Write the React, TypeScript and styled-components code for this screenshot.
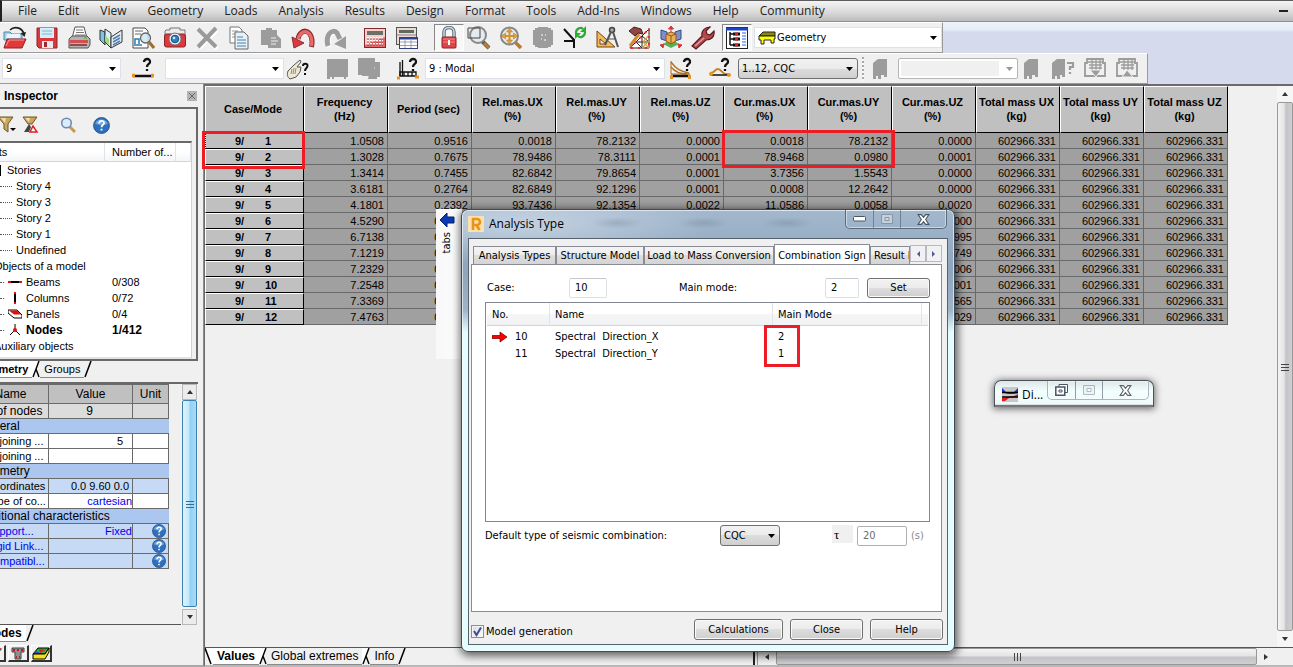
import React from 'react';
import styled, { createGlobalStyle, css } from 'styled-components';

const sans = `"Liberation Sans", Arial, sans-serif`;
const dialogFont = `"DejaVu Sans Condensed", Tahoma, "DejaVu Sans", sans-serif`;
const menuFont = `"Open Sans", "Segoe UI", sans-serif`;

const GlobalStyle = createGlobalStyle`
  *, *::before, *::after { box-sizing: border-box; }
  body { margin: 0; background: #f0f0f0; font-family: ${sans}; font-size: 11px; color: #000; }
  button, input, select { font: inherit; color: inherit; margin: 0; }
  svg { display: block; flex: none; }
`;

/* ---------- shell ---------- */

const Desktop = styled.div`
  position: relative;
  display: flex;
  flex-direction: column;
  min-height: 100vh;
  overflow: hidden;
  background: #f0f0f0;
`;

const MenuBar = styled.nav`
  display: flex;
  align-items: center;
  height: 22px;
  padding: 0 4px 0 16px;
  gap: 21px;
  border-top: 1px solid #5c5c5c;
  border-bottom: 1px solid #8f8f8f;
  border-left: 2px solid #222;
  background: linear-gradient(#f4f4f4, #d8d8d8 60%, #bcbcbc);
  font-family: ${menuFont};
  font-size: 12px;
`;

const MenuLink = styled.a`
  color: #222;
  text-decoration: none;
  line-height: 18px;
`;

const WindowDash = styled.button`
  margin-left: auto;
  width: 12px;
  height: 18px;
  padding: 0;
  border: 0;
  background: none;
  display: grid;
  place-items: center;
`;

const ToolbarDeck = styled.div`
  display: flex;
  flex-direction: column;
  align-items: flex-start;
  background: linear-gradient(#eef3fb, #e4ecf8 8px, #d5daec 10px, #d5daec);
`;

const Toolbar = styled.div`
  display: flex;
  align-items: center;
  height: 31px;
  background: #f0f0f0;
  border-bottom: 1px solid #9a9a9a;
  border-right: 1px solid #9a9a9a;
  border-top: 1px solid #fff;
`;

const ToolGroup = styled.div<{ $start?: number; $gap?: number }>`
  display: flex;
  align-items: center;
  gap: ${p => p.$gap ?? 8}px;
  padding-left: ${p => p.$start ?? 0}px;
`;

const ToolButton = styled.button<{ $pressed?: boolean }>`
  display: grid;
  place-items: center;
  width: ${p => (p.$pressed ? 30 : 24)}px;
  height: 27px;
  padding: 0;
  border: 0;
  background: none;
  ${p => p.$pressed && css`
    background: #f7f7f7;
    border: 1px solid #fff;
    border-top-color: #888;
    border-left-color: #888;
  `}
`;

const ComboBox = styled.div<{ $width: number; $kind?: 'flat' | 'button' | 'disabled' }>`
  display: grid;
  align-items: center;
  width: ${p => p.$width}px;
  height: 21px;
  border: 1px solid #dfe1e8;
  background: #fff;
  font-family: ${dialogFont};
  ${p => p.$kind === 'button' && css`
    border: 1px solid #707070;
    border-radius: 3px;
    background: linear-gradient(#f2f2f2, #ebebeb 50%, #dddddd 50%, #cfcfcf);
  `}
  ${p => p.$kind === 'disabled' && css`
    border-color: #b5b5b5;
    background: linear-gradient(#f0f0f0, #f0f0f0) 2px 2px / calc(100% - 20px) calc(100% - 4px) no-repeat #fff;
    border-radius: 2px;
  `}
  > * { grid-area: 1 / 1; }
  > svg.arrow { justify-self: end; margin-right: 4px; pointer-events: none; }
  > svg.lead { justify-self: start; margin-left: 3px; pointer-events: none; }
`;

const ComboSelect = styled.select<{ $indent?: number }>`
  appearance: none;
  width: 100%;
  height: 19px;
  padding: 0 16px 0 ${p => p.$indent ?? 3}px;
  border: 0;
  background: transparent;
  outline: none;
  font-size: 11px;
  opacity: 1;
`;

const Gripper = styled.span`
  width: 2px;
  height: 24px;
  margin: 0 4px;
  background: repeating-linear-gradient(#a8a8a8 0 2px, #f8f8f8 2px 4px);
`;

type ComboProps = {
  label: string;
  value: string;
  width: number;
  kind?: 'flat' | 'button' | 'disabled';
  indent?: number;
  lead?: React.ReactNode;
};

const Combo = ({ label, value, width, kind, indent, lead }: ComboProps) => (
  <ComboBox $width={width} $kind={kind}>
    {lead}
    <ComboSelect aria-label={label} defaultValue={value} disabled={kind === 'disabled'} $indent={indent}>
      <option value={value}>{value}</option>
    </ComboSelect>
    <svg className="arrow" width="7" height="4" viewBox="0 0 7 4">
      <path d="M0 0h7L3.5 4z" fill={kind === 'disabled' ? '#999' : '#000'} />
    </svg>
  </ComboBox>
);

/* ---------- toolbar drawings ---------- */

const Glyph = ({ children, size = 24 }: { children: React.ReactNode; size?: number }) => (
  <svg width={size} height={size} viewBox="0 0 24 24" aria-hidden="true">{children}</svg>
);

const OpenIcon = () => (
  <Glyph>
    <path d="M1 6h6l2 2h10v6H1z" fill="#a9d2ea" stroke="#4a86ad" />
    <path d="M3 12l1-4h13v4z" fill="#eaf6fd" />
    <path d="M1 22l3-9h19l-4 9z" fill="#e0383b" stroke="#9d1d22" />
    <path d="M3 20l3-6h15" fill="none" stroke="#f59a96" />
    <path d="M7 4c4-4 12-3 14 4" fill="none" stroke="#222" strokeWidth="1.6" />
    <path d="M17.500 7l4 4 1.500-5z" fill="#222" />
  </Glyph>
);
const SaveIcon = () => (
  <Glyph>
    <path d="M2 2h20v20H4l-2-2z" fill="#d8383d" stroke="#8e2227" />
    <path d="M5 2h14v10H5z" fill="#d6edf8" />
    <path d="M7 5h10M7 8h10" stroke="#7fb3cd" />
    <path d="M7 15h11v7H7z" fill="#e9e9ec" />
    <path d="M9 16h3v5H9z" fill="#a3262b" />
  </Glyph>
);
const PrintIcon = () => (
  <Glyph>
    <path d="M8 1h9l3 11H5z" fill="#fff" stroke="#555" />
    <path d="M9 4h7M9 6.500h8M8 9h10" stroke="#777" />
    <path d="M2 13l3-3h15l3 3v6l-2 3H2z" fill="#b9b2b2" stroke="#5b5353" />
    <path d="M3 14h18v3H3z" fill="#d05054" />
    <path d="M3 19h17" stroke="#7d2b2f" strokeWidth="1.500" />
    <path d="M17 12h3" stroke="#6fbf4b" strokeWidth="2" />
  </Glyph>
);
const BookIcon = () => (
  <Glyph>
    <path d="M1 4l5 2v13l-5-5z" fill="#7ec4e6" stroke="#333" />
    <path d="M6 3l6 4v15l-6-6z" fill="#dff0f8" stroke="#333" />
    <path d="M6 9l4 4v6l-4-4z" fill="#9fdc7a" />
    <path d="M12 11l11-7v12l-11 6z" fill="#e8eef4" stroke="#333" />
    <path d="M14 13l7-4M14 16l7-4M14 19l7-4" stroke="#4d7fb4" strokeWidth="1.500" />
  </Glyph>
);
const PreviewIcon = () => (
  <Glyph>
    <path d="M2 2h12l3 3v17H2z" fill="#fff" stroke="#4b4b4b" />
    <path d="M4 5h8M4 8h6" stroke="#666" />
    <path d="M4 18v-5h4v5M3 19h8" fill="none" stroke="#2d7bb0" strokeWidth="1.500" />
    <circle cx="14.500" cy="12" r="5" fill="#cfe6f3" fillOpacity=".85" stroke="#666" strokeWidth="1.300" />
    <path d="M18 16l5 6" stroke="#a26c2a" strokeWidth="3" />
  </Glyph>
);
const CameraIcon = () => (
  <Glyph>
    <path d="M3 4h4V2h10v2h5v5H2V5z" fill="#ececec" stroke="#777" />
    <rect x="1.500" y="8" width="21" height="13" rx="2" fill="#d93a3e" stroke="#8e2227" />
    <circle cx="12" cy="13" r="6" fill="#f2f2f2" stroke="#777" />
    <circle cx="12" cy="13" r="3.800" fill="#2b82c0" stroke="#174f7c" />
    <circle cx="11" cy="12" r="1.300" fill="#cbe8fa" />
  </Glyph>
);
const DeleteIcon = () => (
  <Glyph>
    <path d="M4 4l17 18M21 3L3 21" stroke="#fff" strokeWidth="4.500" transform="translate(1 1)" />
    <path d="M3 3l18 18M21 2L3 21" stroke="#9a9a9a" strokeWidth="4" />
  </Glyph>
);
const CopyIcon = () => (
  <Glyph>
    <path d="M3 1h9l3 3v13H3z" fill="#fff" stroke="#777" />
    <path d="M5 5h6M5 8h6M5 11h4" stroke="#999" />
    <path d="M8 6h9l4 4v13H8z" fill="#e5f2fa" stroke="#666" />
    <path d="M10 11h6M10 14h9M10 17h9M10 20h9" stroke="#4e7ea3" />
  </Glyph>
);
const PasteIcon = () => (
  <Glyph>
    <path d="M2 4h5V2h6v2h5v5l4 4v9H9v-3H2z" fill="#9c9c9c" />
    <path d="M12 12h5M12 15h7M12 18h5" stroke="#eee" />
  </Glyph>
);
const UndoIcon = () => (
  <Glyph>
    <path d="M20.500 21C23 9 16 2 10.500 6.500 8.500 8 7.500 10 7 13" fill="none" stroke="#8c2a2e" strokeWidth="5" />
    <path d="M20.500 20C22.500 9 16 3 10.500 7 8.500 9 7.500 10 7 13" fill="none" stroke="#ea6a6b" strokeWidth="3.200" />
    <path d="M1 11l2 11 10-5z" fill="#dc3a3e" stroke="#8c2a2e" />
  </Glyph>
);
const RedoIcon = () => (
  <Glyph>
    <path d="M5 20C2 9 9 2 14 7l3 6" fill="none" stroke="#fff" strokeWidth="5" transform="translate(1 1)" />
    <path d="M5 20C2 9 9 2 14 7l3 6" fill="none" stroke="#9c9c9c" strokeWidth="5" />
    <path d="M23 10v13l-12-5z" fill="#9c9c9c" />
  </Glyph>
);
const CalcIcon = () => (
  <Glyph>
    <rect x="1.500" y="2.500" width="21" height="19" fill="#e8686a" stroke="#7d2b2f" />
    <path d="M2 3h20v8L2 19z" fill="#f6cfcc" />
    <rect x="4" y="5" width="16" height="4" fill="#6c6f66" />
    <path d="M4 12h16M4 15h16M4 18h16" stroke="#fff" strokeWidth="2" strokeDasharray="2 1" />
    <path d="M4 13h16M4 16h16M4 19h16" stroke="#a33438" strokeDasharray="2 1" />
  </Glyph>
);
const CalcTableIcon = () => (
  <Glyph>
    <rect x="1.500" y="1.500" width="20" height="17" fill="#eed9d5" stroke="#555" />
    <rect x="4" y="4" width="15" height="3" fill="#5e6a60" />
    <rect x="4.500" y="11.500" width="18" height="11" fill="#fff" stroke="#35447a" />
    <path d="M5 12.500h17" stroke="#2c3f9a" strokeWidth="2" />
    <path d="M5 16h17M5 19.500h17M10 13v9M16 13v9" stroke="#9a9fae" />
    <path d="M2 9h19" stroke="#888" />
  </Glyph>
);
const LockIcon = () => (
  <Glyph>
    <path d="M7 12V6c0-6 10-6 10 0v6" fill="none" stroke="#60717c" strokeWidth="3.500" />
    <path d="M7 12V6c0-6 10-6 10 0v6" fill="none" stroke="#c5dbe6" strokeWidth="1.500" />
    <rect x="5" y="11" width="14" height="11" rx="1" fill="#df4448" stroke="#8c2226" />
    <path d="M6 13h12M6 16h12" stroke="#f18d8c" />
    <path d="M12 14v5" stroke="#fff" strokeWidth="2" />
  </Glyph>
);
const ZoomWindowIcon = () => (
  <Glyph>
    <path d="M15 15l7 7" stroke="#555" strokeWidth="4" />
    <path d="M17 17l5 5" stroke="#b87b30" strokeWidth="3" />
    <circle cx="11" cy="9" r="8" fill="#e4eaed" stroke="#888" strokeWidth="2" />
    <path d="M1 12V2h12v10z" fill="none" stroke="#444" />
  </Glyph>
);
const ZoomAllIcon = () => (
  <Glyph>
    <path d="M15 15l7 7" stroke="#b87b30" strokeWidth="3.500" />
    <circle cx="10.500" cy="10" r="8.500" fill="#e6e9e8" stroke="#888" strokeWidth="2" />
    <path d="M10.500 4v12M4.500 10h12" stroke="#d8922c" strokeWidth="2" />
    <path d="M10.500 2l3 4h-6zM10.500 18l3-4h-6zM2.500 10l4-3v6zM18.500 10l-4-3v6z" fill="#e2a13c" stroke="#a87424" strokeWidth=".5" />
  </Glyph>
);
const GreyBlobIcon = () => (
  <Glyph>
    <path d="M4 2h3V1h10v1h3v2h2v15h-2v2h-3v1H7v-1H4v-2H2V4h2z" fill="#9c9c9c" />
    <path d="M10 9h2M14 9h1M10 13h1M13 14h2" stroke="#ddd" strokeWidth="1.500" />
  </Glyph>
);
const AxesRefreshIcon = () => (
  <Glyph>
    <path d="M1 3l10 11M11 22V13M1 15h10" fill="none" stroke="#111" strokeWidth="2" />
    <path d="M13 7c0-5 5-6 7-4M22 6c0 5-5 6-7 4" fill="none" stroke="#2cab35" strokeWidth="2.200" />
    <path d="M23 0v6h-6zM12 13V7h6z" fill="#2cab35" />
  </Glyph>
);
const CompassIcon = () => (
  <Glyph>
    <path d="M2 5v16h18z" fill="#f5b85a" stroke="#6f4717" />
    <path d="M5 13v5h6z" fill="#f0f0f0" stroke="#6f4717" />
    <circle cx="17" cy="4" r="2.500" fill="#aaa" stroke="#444" strokeWidth="1.500" />
    <path d="M16 6l-6 13M18 6l5 15" stroke="#555" strokeWidth="2" />
    <path d="M13 13h8" stroke="#555" />
  </Glyph>
);
const HammerIcon = () => (
  <Glyph>
    <path d="M22 2v20H3z" fill="#fff" />
    <path d="M22 2v20H3M3 22L22 3M15 10v12M9 16h13M15 10l7 6M9 16l6 6" fill="none" stroke="#222" />
    <path d="M15 22l7-7M16 16l6 6M22 9l-6 7" fill="none" stroke="#e8a030" strokeWidth="1.300" />
    <path d="M3 22L22 3M22 3v19H3" fill="none" stroke="#e03030" strokeWidth="2" strokeDasharray="2 5" />
    <path d="M3 20L12 8" stroke="#d38a2f" strokeWidth="3" />
    <path d="M2 5l5-4 7 2 2 5-5-1-3 3z" fill="#8f4744" stroke="#4b1e20" />
  </Glyph>
);
const CubeIcon = () => (
  <Glyph>
    <path d="M2 4l6 2v9l-6-2zM22 4l-6 2v9l6-2z" fill="#7b90cc" stroke="#34498a" />
    <path d="M4 18l8-5 8 5-8 4z" fill="#58b055" />
    <path d="M7 8l5-2 5 2v7l-5 3-5-3z" fill="#f0ad54" stroke="#8d5a18" />
    <path d="M7 8l5 2 5-2M12 10v8" fill="none" stroke="#8d5a18" />
    <path d="M12 6V1M9.500 3L12 0l2.500 3zM1 19l4-1-1 4zM23 19l-4-1 1 4z" fill="#d5373b" stroke="#d5373b" />
  </Glyph>
);
const WrenchIcon = () => (
  <Glyph>
    <path d="M1 20l10-10c-1-5 3-9 8-9l-4 4 1 3 3 1 4-4c1 6-3 9-8 9L5 23z" fill="#b8474d" stroke="#571c20" strokeWidth="1.200" />
    <path d="M4 20l9-8" stroke="#e19a9b" strokeWidth="1.500" />
  </Glyph>
);
const InspectorIcon = () => (
  <Glyph>
    <rect x="1.500" y="1.500" width="21" height="21" fill="#fff" stroke="#222" />
    <path d="M1 3h22" stroke="#1745c8" strokeWidth="3" />
    <path d="M5 6v13M5 8h4M5 13h4M5 19h4" stroke="#111" strokeWidth="1.500" fill="none" />
    <path d="M8 8h7M8 13h7M8 19h7" stroke="#111" strokeWidth="3" />
    <path d="M10 8h3M10 13h3M10 19h3" stroke="#e02020" strokeWidth="3" />
    <path d="M17 7h4M17 10h4M17 13h4M17 16h4M17 19h4" stroke="#2a66e0" />
  </Glyph>
);
const Query = ({ x = 0 }: { x?: number }) => (
  <path d={`M${13 + x} 5c0-4 6.500-4 6 0 0 2-3 2-3 5M${16 + x} 12v2`} fill="none" stroke="#111" strokeWidth="2.300" />
);
const BarQueryIcon = () => (
  <Glyph>
    <path d="M2 19h20" stroke="#111" strokeWidth="2.500" />
    <path d="M1 18.500h3M20 18.500h3" stroke="#e69422" strokeWidth="3.500" />
    <Query />
  </Glyph>
);
const HandQueryIcon = () => (
  <Glyph>
    <path d="M2 14l6-6 6-5 1 2-4 5 4 0-1 5-4 5-6 2c-3-2-3-5-2-8z" fill="#eee9d3" stroke="#555" />
    <path d="M6 12l-1 5M8 11l-1 6M10 11l-1 6" stroke="#777" strokeWidth=".8" />
    <path d="M17 9c0-3 5-3 4.500 0 0 2-2.500 2-2.500 5M19 16v2" fill="none" stroke="#111" strokeWidth="2" />
  </Glyph>
);
const GreyPanelIcon = () => (
  <Glyph>
    <path d="M2 2h21v18h-2v2h-2v-2H9v2H7v-2H5v2H2z" fill="#9c9c9c" />
  </Glyph>
);
const GreyPanelsIcon = () => (
  <Glyph>
    <path d="M1 1h17v4h5v15h-3v2h-9v-3H5v-1H1z" fill="#9c9c9c" />
    <path d="M17 11h1M11 20h1" stroke="#eee" />
  </Glyph>
);
const SupportQueryIcon = () => (
  <Glyph>
    <path d="M4 5v14M6.500 3v16" stroke="#111" strokeWidth="1.300" />
    <path d="M4 15h16v4H4zM8 15v4M12 15v4M16 15v4" fill="none" stroke="#111" strokeWidth="1.300" />
    <path d="M1 21h3M19 20h4" stroke="#e69422" strokeWidth="3" />
    <Query x={1} />
  </Glyph>
);
const DiagramQueryIcon = () => (
  <Glyph>
    <path d="M2 4v13h19" fill="none" stroke="#b06f1b" />
    <path d="M2 5c5 7 9 9 18 11M2 10c4 5 9 7 16 7" fill="none" stroke="#b06f1b" strokeWidth="1.300" />
    <path d="M2 19h19" stroke="#111" strokeWidth="2.500" />
    <path d="M1 20h3M19 20h3" stroke="#e69422" strokeWidth="4" />
    <Query x={2} />
  </Glyph>
);
const WaveQueryIcon = () => (
  <Glyph>
    <path d="M2 16c6 0 4-4 8-4s4 7 11 5" fill="none" stroke="#c98420" strokeWidth="2" />
    <path d="M3 18h17" stroke="#111" strokeWidth="1.500" />
    <circle cx="3" cy="17" r="2" fill="#e69422" />
    <circle cx="21" cy="18" r="2" fill="#e69422" />
    <Query x={1} />
  </Glyph>
);
const GreyBlockIcon = () => (
  <Glyph>
    <path d="M5 6l5-4h9v18h-3v-2h-3v4h-3v-3H8v3H5z" fill="#9c9c9c" />
  </Glyph>
);
const GreyBlockQueryIcon = () => (
  <Glyph>
    <path d="M1 6l5-4h8v18h-3v-2H9v4H6v-3H4v3H1z" fill="#9c9c9c" />
    <path d="M16 6h6v4h-3v3M19 15v2" fill="none" stroke="#9c9c9c" strokeWidth="2.200" />
  </Glyph>
);
const GreyGridIcon = ({ up }: { up?: boolean }) => (
  <Glyph>
    <path d="M4 2h16v4h2v13H2V6h2z" fill="none" stroke="#9c9c9c" strokeWidth="1.800" />
    <path d="M5 5h14M6 8h13M6 11h13M9 3v10M13 3v10M17 3v10" stroke="#9c9c9c" strokeWidth="1.300" />
    <path d={up ? 'M7 20l5-7 6 7z' : 'M7 13h11l-5 7z'} fill="#9c9c9c" stroke="#f0f0f0" />
  </Glyph>
);

/* ---------- workspace ---------- */

const Workspace = styled.div`
  display: flex;
  flex: 1;
  min-height: 0;
`;

const InspectorPane = styled.aside`
  display: flex;
  flex: none;
  justify-content: flex-end;
  width: 204px;
  overflow: hidden;
  border-right: 1px solid #8c8c8c;
  border-bottom: 2px solid #a8a8a8;
`;

const InspectorBody = styled.div`
  display: flex;
  flex-direction: column;
  flex: none;
  width: 240px;
  padding: 0 5px 0 0;
`;

const PaneTitle = styled.h2`
  display: flex;
  align-items: center;
  justify-content: space-between;
  margin: 0;
  height: 23px;
  padding: 0 1px 0 41px;
  font-size: 12px;
  font-weight: bold;
`;

const PaneClose = styled.button`
  display: grid;
  place-items: center;
  width: 10px;
  height: 10px;
  padding: 0;
  border: 0;
  background: #b4b4b4;
`;

const TreeFrame = styled.div`
  border-top: 2px solid #696969;
  border-right: 2px solid #696969;
  border-bottom: 2px solid #696969;
  padding-right: 4px;
`;

const TreeTools = styled.div`
  display: flex;
  align-items: center;
  height: 32px;
  padding-left: 32px;
`;

const TreeToolButton = styled.button<{ $wide?: boolean }>`
  display: grid;
  place-items: center;
  width: ${p => (p.$wide ? 46 : 24)}px;
  height: 24px;
  padding: 0 0 0 ${p => (p.$wide ? 4 : 0)}px;
  border: 0;
  background: none;
`;

const TreeBox = styled.div`
  height: 218px;
  background: #fff;
  border-top: 2px solid #696969;
  border-right: 1px solid #d0d0d0;
  border-bottom: 2px solid #e3e3e3;
`;

const TreeTable = styled.table`
  width: 100%;
  table-layout: fixed;
  border-collapse: separate;
  border-spacing: 0;
  th {
    height: 19px;
    padding: 0 0 0 7px;
    text-align: left;
    font-weight: normal;
    background: linear-gradient(#fff, #fff 45%, #f3f5f8);
    border-right: 1px solid #dfe3e8;
    border-bottom: 1px solid #d5d5d5;
  }
  td { height: 16px; padding: 0; white-space: nowrap; }
  td:nth-child(2) { padding-left: 7px; }
`;

const NodeLabel = styled.span<{ $indent: number; $bold?: boolean }>`
  display: flex;
  align-items: center;
  gap: 4px;
  height: 16px;
  padding-left: ${p => p.$indent}px;
  font-weight: ${p => (p.$bold ? 'bold' : 'normal')};
  font-size: ${p => (p.$bold ? 12 : 11)}px;
`;

const CountText = styled.span<{ $bold?: boolean }>`
  font-weight: ${p => (p.$bold ? 'bold' : 'normal')};
  font-size: ${p => (p.$bold ? 12 : 11)}px;
`;

const Dots = styled.i<{ $width: number }>`
  width: ${p => p.$width}px;
  border-top: 1px dotted #555;
`;

const TabStrip = styled.div<{ $start: number; $height: number }>`
  display: flex;
  align-items: stretch;
  height: ${p => p.$height}px;
  padding-left: ${p => p.$start}px;
`;

const SheetTab = styled.button<{ $active?: boolean; $size?: number }>`
  height: 17px;
  padding: 0 4px;
  border: 0;
  border-bottom: 1px solid #8a8a8a;
  background: ${p => (p.$active ? '#fff' : '#f0f0f0')};
  font-size: ${p => p.$size ?? 12}px;
  font-weight: ${p => (p.$active ? 'bold' : 'normal')};
  line-height: 15px;
  white-space: nowrap;
`;

const Slant = ({ kind }: { kind: 'open' | 'join' | 'close' }) => (
  <svg width="8" height="17" viewBox="0 0 8 17" aria-hidden="true">
    {kind === 'open' && <><path d="M0 0L6 16h2V0z" fill="#fff" /><path d="M0 0L6 16" stroke="#000" strokeWidth="1.500" /></>}
    {kind === 'join' && <><path d="M0 0h6L1 16H0z" fill="#fff" /><path d="M7 0L1 16M4 8l3 8" fill="none" stroke="#000" strokeWidth="1.400" /></>}
    {kind === 'close' && <path d="M7 0L1 16" stroke="#000" strokeWidth="1.500" />}
  </svg>
);

const PropertyArea = styled.div`
  display: flex;
  flex: 1;
  margin-top: 4px;
  border-top: 2px solid #696969;
`;

const PropertyMain = styled.div`
  flex: 1;
  border-bottom: 1px solid #555;
`;

const PropertyTable = styled.table`
  width: 196px;
  margin-left: 9px;
  table-layout: fixed;
  border-collapse: collapse;
  font-size: 11px;
  td, th { height: 15px; padding: 0 2px 0 13px; border: 1px solid #6a6a6a; white-space: nowrap; overflow: hidden; line-height: 13px; }
  thead th { height: 19px; padding: 0; background: #c0c0c0; font-size: 12px; font-weight: normal; text-align: center; }
  td:nth-child(2) { text-align: right; padding: 0; }
  td:nth-child(3) { padding: 0 2px 0 0; }
  td svg { margin-left: auto; }
`;

const PropertyRow = styled.tr<{ $tone: 'info' | 'group' | 'plain' | 'blue'; $link?: boolean; $inset?: number }>`
  background: ${p => ({ info: '#dcdcdc', group: '#abc7f0', plain: '#fff', blue: '#c6d9f5' })[p.$tone]};
  color: ${p => (p.$link ? '#0000f0' : '#000')};
  ${p => p.$tone === 'group' && css`
    && td { padding-left: 4px; font-size: 12px; text-align: left; border-color: #abc7f0; border-top-color: #6a6a6a; border-bottom-color: #6a6a6a; }
  `}
  ${p => p.$tone === 'info' && css`
    && td { font-size: 12px; text-align: center; padding: 0 4px 0 0; }
  `}
  && td:nth-child(2) { padding-right: ${p => p.$inset ?? 0}px; }
`;

const PropertyLink = styled.a`
  color: #0000f0;
  text-decoration: none;
`;

const BlueBar = styled.div`
  display: flex;
  flex-direction: column;
  width: 17px;
  padding: 0 1px;
  background: #f4f4f4;
`;

const BarArrow = styled.button<{ $flat?: boolean; $across?: boolean }>`
  display: grid;
  place-items: center;
  flex: none;
  width: ${p => (p.$across ? 18 : 15)}px;
  height: ${p => (p.$across ? 15 : 16)}px;
  padding: 0;
  border: ${p => (p.$flat ? '0' : '1px solid #b8b8b8')};
  background: ${p => (p.$flat ? 'none' : '#ececec')};
`;

const BlueThumb = styled.div`
  flex: 1;
  display: grid;
  place-items: center;
  margin-bottom: 2px;
  border: 1px solid #3c7fb1;
  border-radius: 2px;
  background: linear-gradient(90deg, #e0f3fc, #c4e8fa 45%, #8fd0f3 55%, #abdcf7);
`;

const ViewButtons = styled.div`
  display: flex;
  height: 22px;
  padding: 2px 0 0 22px;
  gap: 2px;
`;

const ViewButton = styled.button`
  display: grid;
  place-items: center;
  width: 21px;
  height: 17px;
  padding: 0;
  background: #f0f0f0;
  border: 1px solid #fff;
  border-right: 2px solid #333;
  border-bottom: 2px solid #333;
`;

const HelpBall = ({ size }: { size: number }) => (
  <svg width={size} height={size} viewBox="0 0 16 16" aria-hidden="true">
    <circle cx="8" cy="8" r="7.500" fill="#2f6fbe" stroke="#274f86" strokeWidth=".8" />
    <path d="M2 6a6.500 6 0 0 1 12 0c-3 2-8 2-12 0z" fill="#6fa4dc" />
    <path d="M5.800 6c0-3.200 4.800-3 4.600-.3C10.300 7.300 8 7.400 8 9.600M8 11v1.800" fill="none" stroke="#fff" strokeWidth="1.700" />
  </svg>
);

const FunnelIcon = ({ triangle }: { triangle?: boolean }) => (
  <svg width="20" height="18" viewBox="0 0 20 18" aria-hidden="true">
    {triangle ? (
      <>
        <path d="M2 1h14l-5 7H7z" fill="#c9a560" stroke="#6d5523" />
        <path d="M4 2h5L8 6z" fill="#f0deb0" />
        <path d="M3 16l5-8 2 3-2 5z" fill="#444" />
        <path d="M9 16l3-6 4 6z" fill="#fff" stroke="#e02020" strokeWidth="1.500" />
      </>
    ) : (
      <>
        <path d="M1 1h15l-5 7v8l-4-3V8z" fill="#c9a560" stroke="#6d5523" />
        <path d="M4 2h5L8 7z" fill="#f0deb0" />
        <path d="M13 12h6l-3 3z" fill="#000" />
      </>
    )}
  </svg>
);

const SearchIcon = () => (
  <svg width="17" height="17" viewBox="0 0 17 17" aria-hidden="true">
    <path d="M9 9l6 6" stroke="#c79a4c" strokeWidth="3" />
    <circle cx="6.500" cy="6" r="4.800" fill="#d8ecfb" stroke="#7288b4" strokeWidth="1.600" />
  </svg>
);

const BeamIcon = () => (
  <svg width="14" height="14" viewBox="0 0 14 14"><path d="M0 6h14v2H0z" fill="#e01010" /><path d="M3 6h8v2H3z" fill="#000" /></svg>
);
const ColumnIcon = () => (
  <svg width="14" height="14" viewBox="0 0 14 14"><path d="M6 1h2v12H6z" fill="#e01010" /><path d="M6 3h2v8H6z" fill="#000" /></svg>
);
const PanelIcon = () => (
  <svg width="14" height="14" viewBox="0 0 14 14"><path d="M0 3h9l5 5v3H6L0 6z" fill="#fff" stroke="#000" /><path d="M1 3.500h8l4 4H6z" fill="#e01010" /></svg>
);
const NodeIcon = () => (
  <svg width="14" height="14" viewBox="0 0 14 14"><path d="M7 1v6M7 7l-5 5M7 7l5 5" stroke="#000" fill="none" /><circle cx="7" cy="7" r="2" fill="#e01010" /></svg>
);

/* ---------- results sheet ---------- */

const SheetPane = styled.main`
  position: relative;
  display: flex;
  flex-direction: column;
  flex: 1;
  min-width: 0;
  border-top: 2px solid #6b6b6b;
  border-left: 1px solid #6b6b6b;
  border-bottom: 2px solid #b8b8b8;
`;

const SheetRow = styled.div`
  display: flex;
  flex: 1;
  min-height: 0;
`;

const SheetScroll = styled.div`
  flex: 1;
  min-width: 0;
`;

const ResultTable = styled.table`
  width: 1023px;
  table-layout: fixed;
  border-collapse: separate;
  border-spacing: 0;
  font-size: 11px;
  thead th {
    height: 47px;
    padding: 0 3px 2px 0;
    background: #c0c0c0;
    border: 1px solid #000;
    border-top-color: #fff;
    border-left-color: #fff;
    line-height: 14px;
    white-space: nowrap;
  }
  td {
    height: 16px;
    padding: 0 3px 0 0;
    background: #a0a0a0;
    border-right: 1px solid #696969;
    border-bottom: 1px solid #696969;
    text-align: right;
    line-height: 14px;
  }
  tbody th {
    height: 16px;
    padding: 0;
    background: #c0c0c0;
    border: 1px solid #000;
    border-top-color: #fff;
    border-left-color: #fff;
    line-height: 14px;
  }
`;

const ModeCell = styled.span<{ $focus?: boolean }>`
  display: grid;
  grid-template-columns: 30px 1fr;
  padding-left: 29px;
  text-align: left;
  outline: ${p => (p.$focus ? '1px dotted #000' : 'none')};
`;

const Callout = styled.div<{ $left: number; $top: number; $width: number; $height: number }>`
  position: absolute;
  left: ${p => p.$left}px;
  top: ${p => p.$top}px;
  width: ${p => p.$width}px;
  height: ${p => p.$height}px;
  border: 3px solid #ee1c25;
  pointer-events: none;
`;

const GreyBar = styled.div`
  display: flex;
  flex-direction: column;
  align-items: center;
  width: 16px;
  background: #f6f6f6;
`;

const GreyThumb = styled.div<{ $across?: boolean }>`
  flex: 1;
  display: grid;
  place-items: center;
  align-self: stretch;
  border: 1px solid #989898;
  border-radius: 2px;
  background: ${p => (p.$across
    ? 'linear-gradient(#f4f4f4, #e4e4e6 45%, #c4c4c8 55%, #cfcfd2)'
    : 'linear-gradient(90deg, #f4f4f4, #e4e4e6 45%, #c4c4c8 55%, #cfcfd2)')};
`;

const SheetFooter = styled.div`
  display: grid;
  grid-template-columns: 550px 1fr;
  height: 18px;
  border-top: 1px solid #555;
`;

const FooterTabs = styled.div`
  display: flex;
  border-right: 2px solid #222;
`;

const AcrossBar = styled.div`
  display: flex;
  align-items: center;
  margin: 0 18px 0 2px;
  border-left: 1px solid #999;
`;

const Grip = ({ across, blue }: { across?: boolean; blue?: boolean }) => (
  <svg width="8" height="8" viewBox="0 0 8 8" aria-hidden="true">
    <path d={across ? 'M1.500 0v8M4.500 0v8M7.500 0v8' : 'M0 1.500h8M0 4.500h8M0 7.500h8'} stroke={blue ? '#3a6c93' : '#444'} />
  </svg>
);

const Triangle = ({ to }: { to: 'up' | 'down' | 'left' | 'right' }) => (
  <svg width="8" height="8" viewBox="0 0 8 8" aria-hidden="true">
    <path
      fill="#333"
      d={{ up: 'M1 6h6L4 2z', down: 'M1 2h6L4 6z', left: 'M6 1v6L2 4z', right: 'M2 1v6l4-3z' }[to]}
    />
  </svg>
);

/* ---------- floating windows ---------- */

const TabsFlyout = styled.div`
  position: absolute;
  left: 436px;
  top: 209px;
  width: 26px;
  height: 150px;
  display: flex;
  flex-direction: column;
  align-items: center;
  gap: 4px;
  padding: 3px 4px 0 0;
  background: linear-gradient(90deg, #f8f8f8, #fcfcfc);
`;

const FlyoutText = styled.span`
  writing-mode: vertical-rl;
  transform: rotate(180deg);
  font-family: ${dialogFont};
  font-size: 11px;
  line-height: 14px;
`;

const Dialog = styled.section`
  position: absolute;
  left: 461px;
  top: 209px;
  width: 494px;
  display: flex;
  flex-direction: column;
  padding: 0 6px 6px;
  border: 1px solid #3f4a55;
  border-radius: 7px;
  background:
    radial-gradient(ellipse 26px 6px at 155px 13px, rgba(80, 96, 112, 0.22), transparent),
    radial-gradient(ellipse 26px 6px at 241px 13px, rgba(80, 96, 112, 0.22), transparent),
    radial-gradient(ellipse 26px 6px at 325px 13px, rgba(80, 96, 112, 0.22), transparent),
    radial-gradient(ellipse 190px 40px at 60px 14px, rgba(225, 234, 244, 0.55), transparent),
    linear-gradient(#a3b8cd, #8ea5bd 60px, #9fb3c8 100px, #e4fdff 122px, #e4fdff);
  box-shadow: inset 0 0 0 1px rgba(255, 255, 255, 0.6), 1px 2px 9px 2px rgba(0, 0, 0, 0.6);
  font-family: ${dialogFont};
`;

const DialogTitle = styled.header`
  display: flex;
  align-items: center;
  height: 28px;
  padding-right: 1px;
  gap: 5px;
  font-family: ${menuFont};
  font-size: 12px;
  h1 { margin: 0; font: inherit; line-height: 18px; }
`;

const CaptionButtons = styled.div<{ $light?: boolean }>`
  display: flex;
  flex: none;
  align-self: flex-start;
  margin-left: auto;
  height: 19px;
  border: 1px solid ${p => (p.$light ? '#aab4ba' : '#5c6b7a')};
  border-top: 0;
  border-radius: 0 0 5px 5px;
  box-shadow: inset 0 0 0 1px rgba(255, 255, 255, 0.45);
`;

const CaptionButton = styled.button<{ $width: number }>`
  display: grid;
  place-items: center;
  width: ${p => p.$width}px;
  padding: 0;
  border: 0;
  background: none;
  & + & { border-left: 1px solid rgba(80, 95, 110, 0.6); }
`;

const DialogBody = styled.div`
  display: flex;
  flex-direction: column;
  padding: 5px 4px 4px 2px;
  border: 1px solid #58626c;
  background: #f0f0f0;
`;

const DialogTabs = styled.div`
  display: flex;
  align-items: flex-end;
  height: 20px;
  padding: 0 1px 0 2px;
`;

const DialogTab = styled.button<{ $active?: boolean; $cut?: boolean; $width: number }>`
  flex: none;
  width: ${p => p.$width}px;
  height: ${p => (p.$active ? 21 : 18)}px;
  margin-bottom: ${p => (p.$active ? -1 : 0)}px;
  padding: ${p => (p.$cut ? '0 0 0 3px' : '0')};
  border: 1px solid #898c95;
  border-bottom: 0;
  background: ${p => (p.$active ? '#fff' : 'linear-gradient(#f4f4f4, #ececec 50%, #dedede 50%, #d4d4d4)')};
  white-space: nowrap;
  overflow: hidden;
  text-align: ${p => (p.$cut ? 'left' : 'center')};
`;

const TabScroller = styled.div`
  display: flex;
  flex: none;
  align-self: flex-start;
  margin: 1px 0 0 auto;
  height: 17px;
`;

const TabScrollButton = styled.button`
  display: grid;
  place-items: center;
  width: 16px;
  padding: 0;
  border: 1px solid #b9b9c6;
  background: #f1f1f4;
`;

const TabPage = styled.div`
  display: flex;
  flex-direction: column;
  height: 348px;
  margin-right: 1px;
  padding: 12px 11px 0 13px;
  border: 1px solid #898c95;
  background: #fff;
`;

const FormGrid = styled.div`
  display: grid;
  grid-template-columns: 82px 38px 1fr 34px 71px;
  align-items: center;
  padding-left: 2px;
  height: 21px;
`;

const ModeField = styled.label`
  padding-left: 72px;
`;

const SetSlot = styled.div`
  display: flex;
  padding-left: 8px;
`;

const TextField = styled.input`
  width: 100%;
  height: 20px;
  padding: 0 5px;
  border: 1px solid #dcdfe6;
  border-top-color: #c5c8cf;
  border-radius: 2px;
  background: #fff;
  outline: none;
  &:disabled { color: #6d6d6d; border-color: #afafaf; opacity: 1; }
`;

const PushButton = styled.button<{ $width: number; $height?: number }>`
  width: ${p => p.$width}px;
  height: ${p => p.$height ?? 21}px;
  padding: 0;
  border: 1px solid #707070;
  border-radius: 3px;
  background: linear-gradient(#f2f2f2, #ebebeb 50%, #dddddd 50%, #cfcfcf);
  box-shadow: inset 0 0 0 1px #fafafa;
`;

const ListFrame = styled.div`
  position: relative;
  height: 220px;
  margin-top: 4px;
  padding: 0 1px;
  border: 1px solid #828790;
  background: #fff;
`;

const ModeTable = styled.table`
  width: 100%;
  table-layout: fixed;
  border-collapse: separate;
  border-spacing: 0;
  th {
    height: 23px;
    padding: 0 0 0 5px;
    text-align: left;
    font-weight: normal;
    background: linear-gradient(#fff, #fff 50%, #f5f6f8 50%, #f1f2f4);
    border-right: 1px solid #e2e4e8;
    border-bottom: 1px solid #d5d5d5;
  }
  th:last-child { border-right: 0; }
  td { height: 17px; padding: 0 0 0 5px; line-height: 13px; white-space: pre; }
  tbody::before { content: ''; display: block; height: 2px; }
`;

const NumberCell = styled.span`
  display: grid;
  grid-template-columns: 23px 1fr;
  align-items: center;
`;

const OptionRow = styled.div`
  display: grid;
  grid-template-columns: 235px 60px 52px 25px 50px 1fr;
  align-items: center;
  margin-top: 3px;
  height: 21px;
`;

const Tau = styled.label`
  grid-column: 4;
  width: 21px;
  height: 18px;
  padding-left: 2px;
  background: #f0f0f0;
  font-family: "Liberation Serif", serif;
  font-size: 13px;
  line-height: 19px;
  align-self: start;
`;

const UnitNote = styled.span`
  padding-left: 4px;
  color: #8a8a8a;
`;

const DialogFooter = styled.footer`
  display: flex;
  align-items: center;
  padding-top: 7px;
  gap: 7px;
`;

const CheckLabel = styled.label`
  display: flex;
  align-items: center;
  gap: 2px;
  margin-right: auto;
  padding-top: 4px;
  > span:first-child { display: grid; }
  > span:first-child > * { grid-area: 1 / 1; }
`;

const CheckInput = styled.input`
  appearance: none;
  width: 13px;
  height: 13px;
  margin: 0;
  border: 1px solid #8e8f8f;
  background: linear-gradient(135deg, #d5dae0, #fff);
  box-shadow: inset 0 0 0 1px #f4f4f4;
`;

const MiniWindow = styled.section`
  position: absolute;
  left: 994px;
  top: 380px;
  width: 160px;
  height: 27px;
  display: flex;
  align-items: center;
  gap: 4px;
  padding: 0 5px 0 7px;
  border: 1px solid #4c5358;
  border-bottom: 0;
  border-radius: 7px 7px 0 0;
  background: linear-gradient(#dfe6e8, #f3ffff 40%, #eefafa 90%, #777 92%);
  box-shadow: 0 1px 7px 1px rgba(0, 0, 0, 0.55);
  font-family: ${menuFont};
  font-size: 12px;
`;

const CrossGlyph = ({ thin }: { thin?: boolean }) => (
  <svg width="13" height="11" viewBox="0 0 12 10" aria-hidden="true">
    <path d="M1 .5h3l2 2.500 2-2.500h3L8 5l3 4.500H8L6 7 4 9.500H1L4 5z" fill="#fff" stroke={thin ? '#5d6468' : '#4a5663'} />
  </svg>
);
const MaxGlyph = () => (
  <svg width="12" height="10" viewBox="0 0 12 10" aria-hidden="true" opacity="0.5">
    <path d="M.5.5h11v9H.5z" fill="#e6ecf0" stroke="#6c7a86" />
    <path d="M4 3.500h4v3H4z" fill="#fff" stroke="#6c7a86" />
  </svg>
);
const MinGlyph = () => (
  <svg width="13" height="6" viewBox="0 0 13 6" aria-hidden="true">
    <rect x=".5" y=".5" width="12" height="4.500" rx="1" fill="#fff" stroke="#4a5663" />
  </svg>
);
const RestoreGlyph = () => (
  <svg width="13" height="12" viewBox="0 0 13 12" aria-hidden="true">
    <path d="M4 .5h8.500v8H4z" fill="#fff" stroke="#4a5663" />
    <path d="M.8 3h9v8.300h-9z" fill="#fff" stroke="#4a5663" strokeWidth="1.500" />
    <path d="M4 6h3v2H4z" fill="#fff" stroke="#4a5663" />
  </svg>
);

/* ---------- data ---------- */

const menus = ['File', 'Edit', 'View', 'Geometry', 'Loads', 'Analysis', 'Results', 'Design', 'Format', 'Tools', 'Add-Ins', 'Windows', 'Help', 'Community'];

const fileTools: [string, () => React.JSX.Element][] = [
  ['Open', OpenIcon], ['Save', SaveIcon], ['Print', PrintIcon], ['Printout composition', BookIcon],
  ['Print preview', PreviewIcon], ['Screen capture', CameraIcon], ['Delete', DeleteIcon],
  ['Copy', CopyIcon], ['Paste', PasteIcon], ['Undo', UndoIcon], ['Redo', RedoIcon],
];
const viewTools: [string, () => React.JSX.Element][] = [
  ['Zoom window', ZoomWindowIcon], ['Zoom all', ZoomAllIcon], ['Snap', GreyBlobIcon],
  ['Rotate axes', AxesRefreshIcon], ['Dimension', CompassIcon], ['Edit structure', HammerIcon],
  ['3D view', CubeIcon], ['Tools', WrenchIcon],
];

const columns: [string, string?][] = [
  ['Frequency', '(Hz)'], ['Period (sec)'], ['Rel.mas.UX', '(%)'], ['Rel.mas.UY', '(%)'], ['Rel.mas.UZ', '(%)'],
  ['Cur.mas.UX', '(%)'], ['Cur.mas.UY', '(%)'], ['Cur.mas.UZ', '(%)'],
  ['Total mass UX', '(kg)'], ['Total mass UY', '(kg)'], ['Total mass UZ', '(kg)'],
];

const modes: string[][] = [
  ['1.0508', '0.9516', '0.0018', '78.2132', '0.0000', '0.0018', '78.2132', '0.0000'],
  ['1.3028', '0.7675', '78.9486', '78.3111', '0.0001', '78.9468', '0.0980', '0.0001'],
  ['1.3414', '0.7455', '82.6842', '79.8654', '0.0001', '3.7356', '1.5543', '0.0000'],
  ['3.6181', '0.2764', '82.6849', '92.1296', '0.0001', '0.0008', '12.2642', '0.0000'],
  ['4.1801', '0.2392', '93.7436', '92.1354', '0.0022', '11.0586', '0.0058', '0.0020'],
  ['4.5290', '0.2208', '', '', '', '', '', '0.0000'],
  ['6.7138', '0.1489', '', '', '', '', '', '0.0995'],
  ['7.1219', '0.1404', '', '', '', '', '', '0.0749'],
  ['7.2329', '0.1383', '', '', '', '', '', '0.0006'],
  ['7.2548', '0.1378', '', '', '', '', '', '0.0001'],
  ['7.3369', '0.1363', '', '', '', '', '', '0.0565'],
  ['7.4763', '0.1338', '', '', '', '', '', '0.0029'],
];
const totals = ['602966.331', '602966.331', '602966.331'];

type TreeItem = { label: string; indent: number; dots?: number; icon?: React.ReactNode; count?: string; bold?: boolean };
const tree: TreeItem[] = [
  { label: 'Stories', indent: 31, icon: <svg width="9" height="11" viewBox="0 0 9 11"><path d="M0 0h7v11H0z" /></svg> },
  { label: 'Story 4', indent: 37, dots: 12 },
  { label: 'Story 3', indent: 37, dots: 12 },
  { label: 'Story 2', indent: 37, dots: 12 },
  { label: 'Story 1', indent: 37, dots: 12 },
  { label: 'Undefined', indent: 37, dots: 12 },
  { label: 'Objects of a model', indent: 31 },
  { label: 'Beams', indent: 37, dots: 4, icon: <BeamIcon />, count: '0/308' },
  { label: 'Columns', indent: 37, dots: 4, icon: <ColumnIcon />, count: '0/72' },
  { label: 'Panels', indent: 37, dots: 4, icon: <PanelIcon />, count: '0/4' },
  { label: 'Nodes', indent: 37, dots: 4, icon: <NodeIcon />, count: '1/412', bold: true },
  { label: 'Auxiliary objects', indent: 31 },
];

/* ---------- page ---------- */

const InspectorPanel = () => (
  <InspectorPane>
    <InspectorBody>
      <PaneTitle>
        Inspector
        <PaneClose aria-label="Close inspector">
          <svg width="8" height="8" viewBox="0 0 8 8"><path d="M1 1l6 6M7 1L1 7" stroke="#666" /></svg>
        </PaneClose>
      </PaneTitle>
      <TreeFrame>
        <TreeTools>
          <TreeToolButton aria-label="Filter"><FunnelIcon /></TreeToolButton>
          <TreeToolButton aria-label="Clear filter"><FunnelIcon triangle /></TreeToolButton>
          <TreeToolButton $wide aria-label="Find"><SearchIcon /></TreeToolButton>
          <TreeToolButton aria-label="Help"><HelpBall size={17} /></TreeToolButton>
        </TreeTools>
        <TreeBox>
          <TreeTable>
            <colgroup><col style={{ width: 142 }} /><col style={{ width: 71 }} /><col /></colgroup>
            <thead><tr><th>Objects</th><th>Number of...</th><th aria-label="Spare" /></tr></thead>
            <tbody>
              {tree.map(item => (
                <tr key={item.label}>
                  <td>
                    <NodeLabel $indent={item.indent} $bold={item.bold}>
                      {item.dots && <Dots $width={item.dots} />}
                      {item.icon}
                      {item.label}
                    </NodeLabel>
                  </td>
                  <td><CountText $bold={item.bold}>{item.count}</CountText></td>
                  <td />
                </tr>
              ))}
            </tbody>
          </TreeTable>
        </TreeBox>
      </TreeFrame>
      <TabStrip $start={10} $height={17}>
        <SheetTab $active $size={11}>Geometry</SheetTab>
        <Slant kind="join" />
        <SheetTab $size={11}>Groups</SheetTab>
        <Slant kind="close" />
      </TabStrip>
      <PropertyArea>
        <PropertyMain>
          <PropertyTable>
            <colgroup><col style={{ width: 76 }} /><col style={{ width: 84 }} /><col style={{ width: 36 }} /></colgroup>
            <thead><tr><th>Name</th><th>Value</th><th>Unit</th></tr></thead>
            <tbody>
              <PropertyRow $tone="info" $inset={2}><td>No. of nodes</td><td>9</td><td /></PropertyRow>
              <PropertyRow $tone="group"><td colSpan={3}>General</td></PropertyRow>
              <PropertyRow $tone="plain" $inset={9}><td>Adjoining ...</td><td>5</td><td /></PropertyRow>
              <PropertyRow $tone="plain"><td>Adjoining ...</td><td /><td /></PropertyRow>
              <PropertyRow $tone="group"><td colSpan={3}>Geometry</td></PropertyRow>
              <PropertyRow $tone="blue" $inset={3}><td>Coordinates</td><td>0.0 9.60 0.0</td><td /></PropertyRow>
              <PropertyRow $tone="plain"><td>Type of co...</td><td><PropertyLink href="#type">cartesian</PropertyLink></td><td /></PropertyRow>
              <PropertyRow $tone="group"><td colSpan={3}>Additional characteristics</td></PropertyRow>
              <PropertyRow $tone="blue" $link><td>Support...</td><td>Fixed</td><td><HelpBall size={14} /></td></PropertyRow>
              <PropertyRow $tone="blue" $link><td>Rigid Link...</td><td /><td><HelpBall size={14} /></td></PropertyRow>
              <PropertyRow $tone="blue" $link><td>Compatibl...</td><td /><td><HelpBall size={14} /></td></PropertyRow>
            </tbody>
          </PropertyTable>
        </PropertyMain>
        <BlueBar>
          <BarArrow aria-label="Scroll up"><Triangle to="up" /></BarArrow>
          <BlueThumb><Grip blue /></BlueThumb>
          <BarArrow aria-label="Scroll down"><Triangle to="down" /></BarArrow>
        </BlueBar>
      </PropertyArea>
      <TabStrip $start={18} $height={18}>
        <SheetTab $active>Nodes</SheetTab>
        <Slant kind="close" />
      </TabStrip>
      <ViewButtons>
        <ViewButton aria-label="Section view">
          <svg width="16" height="14" viewBox="0 0 16 14"><path d="M2 2h12v3h-4v8H6V5H2z" fill="#888" stroke="#c22" strokeDasharray="2 2" /></svg>
        </ViewButton>
        <ViewButton aria-label="Reinforcement view">
          <svg width="16" height="14" viewBox="0 0 16 14"><path d="M2 2h12v4h-3v7H5V6H2z" fill="#8b8f94" stroke="#444" /><path d="M3 4h2M7 4h2M11 4h2M6 11h1M9 11h1" stroke="#e01010" strokeWidth="2" /></svg>
        </ViewButton>
        <ViewButton aria-label="Map view">
          <svg width="18" height="14" viewBox="0 0 18 14"><path d="M6 2h11l-4 6H1z" fill="#2fb04a" stroke="#000" /><path d="M7 3l7 1-6 3z" fill="#e02020" /><path d="M4 5l4 2H2z" fill="#2a50d8" /><path d="M1 8h12l4-6v4l-4 7H1z" fill="#f6e21a" stroke="#000" /></svg>
        </ViewButton>
      </ViewButtons>
    </InspectorBody>
  </InspectorPane>
);

const Results = () => (
  <SheetPane>
    <SheetRow>
      <SheetScroll>
        <ResultTable>
          <colgroup>
            <col style={{ width: 99 }} />
            {columns.map(([name]) => <col key={name} />)}
          </colgroup>
          <thead>
            <tr>
              <th scope="col">Case/Mode</th>
              {columns.map(([name, unit]) => (
                <th key={name} scope="col">{name}{unit && <><br />{unit}</>}</th>
              ))}
            </tr>
          </thead>
          <tbody>
            {modes.map((cells, i) => (
              <tr key={i}>
                <th scope="row"><ModeCell $focus={i === 0}><span>9/</span><span>{i + 1}</span></ModeCell></th>
                {[...cells, ...totals].map((cell, j) => <td key={j}>{cell}</td>)}
              </tr>
            ))}
          </tbody>
        </ResultTable>
      </SheetScroll>
      <GreyBar>
        <BarArrow $flat aria-label="Scroll up"><Triangle to="up" /></BarArrow>
        <GreyThumb><Grip /></GreyThumb>
        <BarArrow $flat aria-label="Scroll down"><Triangle to="down" /></BarArrow>
      </GreyBar>
    </SheetRow>
    <SheetFooter>
      <FooterTabs>
        <Slant kind="open" />
        <SheetTab $active>Values</SheetTab>
        <Slant kind="join" />
        <SheetTab>Global extremes</SheetTab>
        <Slant kind="join" />
        <SheetTab>Info</SheetTab>
        <Slant kind="close" />
      </FooterTabs>
      <AcrossBar>
        <BarArrow $flat $across aria-label="Scroll left"><Triangle to="left" /></BarArrow>
        <GreyThumb $across><Grip across /></GreyThumb>
        <BarArrow $flat $across aria-label="Scroll right"><Triangle to="right" /></BarArrow>
      </AcrossBar>
    </SheetFooter>
  </SheetPane>
);

const AnalysisDialog = () => (
  <Dialog role="dialog" aria-label="Analysis Type">
    <DialogTitle>
      <svg width="16" height="16" viewBox="0 0 16 16" aria-hidden="true">
        <rect width="16" height="16" fill="#fbe0b0" />
        <path d="M5 14V3h4a3 3 0 0 1 0 6H5M8.500 9l3 5" fill="none" stroke="#e8941a" strokeWidth="2.600" />
      </svg>
      <h1>Analysis Type</h1>
      <CaptionButtons>
        <CaptionButton $width={27} aria-label="Minimize"><MinGlyph /></CaptionButton>
        <CaptionButton $width={27} aria-label="Maximize"><MaxGlyph /></CaptionButton>
        <CaptionButton $width={46} aria-label="Close"><CrossGlyph /></CaptionButton>
      </CaptionButtons>
    </DialogTitle>
    <DialogBody>
      <DialogTabs role="tablist">
        <DialogTab role="tab" $width={83}>Analysis Types</DialogTab>
        <DialogTab role="tab" $width={88}>Structure Model</DialogTab>
        <DialogTab role="tab" $width={130}>Load to Mass Conversion</DialogTab>
        <DialogTab role="tab" $width={96} $active aria-selected="true">Combination Sign</DialogTab>
        <DialogTab role="tab" $width={40} $cut>Result F</DialogTab>
        <TabScroller>
          <TabScrollButton aria-label="Previous tabs"><svg width="6" height="8" viewBox="0 0 6 8"><path d="M5 1v6L2 4z" fill="#4a5a9a" /></svg></TabScrollButton>
          <TabScrollButton aria-label="Next tabs"><svg width="6" height="8" viewBox="0 0 6 8"><path d="M1 1v6l3-3z" fill="#4a5a9a" /></svg></TabScrollButton>
        </TabScroller>
      </DialogTabs>
      <TabPage>
        <FormGrid>
          <label htmlFor="case-no">Case:</label>
          <TextField id="case-no" defaultValue="10" />
          <ModeField htmlFor="main-mode">Main mode:</ModeField>
          <TextField id="main-mode" defaultValue="2" />
          <SetSlot><PushButton $width={63} $height={20}>Set</PushButton></SetSlot>
        </FormGrid>
        <ListFrame>
          <ModeTable>
            <colgroup><col style={{ width: 63 }} /><col style={{ width: 223 }} /><col style={{ width: 149 }} /><col /></colgroup>
            <thead><tr><th>No.</th><th>Name</th><th>Main Mode</th><th aria-label="Spare" /></tr></thead>
            <tbody>
              <tr>
                <td>
                  <NumberCell>
                    <svg width="16" height="12" viewBox="0 0 16 12"><path d="M0 4.500h8V1l7 5-7 5V7.500H0z" fill="#f00" stroke="#600" strokeWidth=".7" /></svg>
                    10
                  </NumberCell>
                </td>
                <td>{'Spectral  Direction_X'}</td><td>2</td><td />
              </tr>
              <tr>
                <td><NumberCell><span />11</NumberCell></td>
                <td>{'Spectral  Direction_Y'}</td><td>1</td><td />
              </tr>
            </tbody>
          </ModeTable>
          <Callout $left={278} $top={22} $width={36} $height={42} />
        </ListFrame>
        <OptionRow>
          <span>Default type of seismic combination:</span>
          <Combo label="Default type of seismic combination" value="CQC" width={60} kind="button" />
          <Tau htmlFor="tau">τ</Tau>
          <TextField id="tau" defaultValue="20" disabled />
          <UnitNote>(s)</UnitNote>
        </OptionRow>
      </TabPage>
      <DialogFooter>
        <CheckLabel>
          <span>
            <CheckInput type="checkbox" defaultChecked />
            <svg width="13" height="13" viewBox="0 0 13 13" pointerEvents="none"><path d="M3 6l2.500 4L10 2.500" fill="none" stroke="#3c4f94" strokeWidth="2" /></svg>
          </span>
          <span>Model generation</span>
        </CheckLabel>
        <PushButton $width={89}>Calculations</PushButton>
        <PushButton $width={73}>Close</PushButton>
        <PushButton $width={73}>Help</PushButton>
      </DialogFooter>
    </DialogBody>
  </Dialog>
);

export default function App() {
  return (
    <>
      <GlobalStyle />
      <Desktop>
        <MenuBar>
          {menus.map(name => <MenuLink key={name} href={`#${name.toLowerCase()}`}>{name}</MenuLink>)}
          <WindowDash aria-label="Minimize"><svg width="9" height="2" viewBox="0 0 9 2"><path d="M0 0h9v2H0z" fill="#222" /></svg></WindowDash>
        </MenuBar>
        <ToolbarDeck>
          <Toolbar>
            <ToolGroup $start={3}>
              {fileTools.map(([name, Icon]) => <ToolButton key={name} aria-label={name}><Icon /></ToolButton>)}
            </ToolGroup>
            <ToolGroup $start={16}>
              <ToolButton aria-label="Calculations"><CalcIcon /></ToolButton>
              <ToolButton aria-label="Tables"><CalcTableIcon /></ToolButton>
            </ToolGroup>
            <ToolGroup $start={15} $gap={3}>
              <ToolButton $pressed aria-label="Lock results"><LockIcon /></ToolButton>
              <ToolGroup>
                {viewTools.map(([name, Icon]) => <ToolButton key={name} aria-label={name}><Icon /></ToolButton>)}
              </ToolGroup>
            </ToolGroup>
            <ToolGroup $start={7} $gap={2}>
              <ToolButton $pressed aria-label="Object inspector"><InspectorIcon /></ToolButton>
              <Combo
                label="Layout"
                value="Geometry"
                width={188}
                indent={22}
                lead={(
                  <svg className="lead" width="18" height="14" viewBox="0 0 18 14" aria-hidden="true">
                    <path d="M5 1h12v4H1z" fill="#8a8a10" stroke="#222" />
                    <path d="M1 5h16v3h-1v4h-3V9H6v4H3V9H1z" fill="#ff0" stroke="#222" />
                  </svg>
                )}
              />
            </ToolGroup>
          </Toolbar>
          <Toolbar>
            <ToolGroup $start={2} $gap={10}>
              <Combo label="Bar selection" value="9" width={119} />
              <ToolButton aria-label="Select bars"><BarQueryIcon /></ToolButton>
              <Combo label="Node selection" value="" width={119} />
            </ToolGroup>
            <ToolGroup $start={2} $gap={15}>
              <ToolButton aria-label="Select nodes"><HandQueryIcon /></ToolButton>
              <ToolGroup>
                <ToolButton aria-label="Previous panel" disabled><GreyPanelIcon /></ToolButton>
                <ToolButton aria-label="Next panel" disabled><GreyPanelsIcon /></ToolButton>
              </ToolGroup>
            </ToolGroup>
            <ToolGroup $start={15} $gap={5}>
              <ToolButton aria-label="Select case"><SupportQueryIcon /></ToolButton>
              <Combo label="Load case" value="9 : Modal" width={240} />
            </ToolGroup>
            <ToolGroup $start={4} $gap={15}>
              <ToolButton aria-label="Diagram query"><DiagramQueryIcon /></ToolButton>
              <ToolGroup $gap={6}>
                <ToolButton aria-label="Mode query"><WaveQueryIcon /></ToolButton>
                <Combo label="Mode" value="1..12, CQC" width={120} kind="button" />
              </ToolGroup>
            </ToolGroup>
            <Gripper />
            <ToolGroup $gap={6}>
              <ToolButton aria-label="Phase" disabled><GreyBlockIcon /></ToolButton>
              <ToolGroup $gap={1}>
                <Combo label="Phase" value="" width={120} kind="disabled" />
                <ToolGroup>
                  <ToolButton aria-label="Phase view" disabled><GreyBlockIcon /></ToolButton>
                  <ToolButton aria-label="Phase query" disabled><GreyBlockQueryIcon /></ToolButton>
                  <ToolButton aria-label="Table down" disabled><GreyGridIcon /></ToolButton>
                  <ToolButton aria-label="Table up" disabled><GreyGridIcon up /></ToolButton>
                </ToolGroup>
              </ToolGroup>
            </ToolGroup>
            <ToolGroup $start={8} />
          </Toolbar>
        </ToolbarDeck>
        <Workspace>
          <InspectorPanel />
          <Results />
        </Workspace>
        <Callout $left={202} $top={131} $width={103} $height={38} />
        <Callout $left={722} $top={130} $width={173} $height={38} />
        <TabsFlyout>
          <svg width="16" height="16" viewBox="0 0 16 16" aria-hidden="true">
            <path d="M1 8l7-7v4h7v6H8v4z" fill="#0a3ab4" stroke="#04206e" />
          </svg>
          <FlyoutText>tabs</FlyoutText>
        </TabsFlyout>
        <AnalysisDialog />
        <MiniWindow aria-label="Diagrams">
          <svg width="16" height="15" viewBox="0 0 16 15" aria-hidden="true">
            <path d="M0 0h16v15H0z" fill="#c8c8c8" />
            <path d="M0 1l4 4h8l4-4v5l-4 1H6L0 5z" fill="#1b2fd8" />
            <path d="M0 14v-3l6-1 6-1 4-2v3l-9 1-4 3z" fill="#e02020" />
            <path d="M0 5.500h16M0 10h16" stroke="#000" strokeWidth="1.500" />
          </svg>
          <span>Di...</span>
          <CaptionButtons $light>
            <CaptionButton $width={27} aria-label="Restore"><RestoreGlyph /></CaptionButton>
            <CaptionButton $width={27} aria-label="Maximize"><MaxGlyph /></CaptionButton>
            <CaptionButton $width={46} aria-label="Close"><CrossGlyph thin /></CaptionButton>
          </CaptionButtons>
        </MiniWindow>
      </Desktop>
    </>
  );
}
